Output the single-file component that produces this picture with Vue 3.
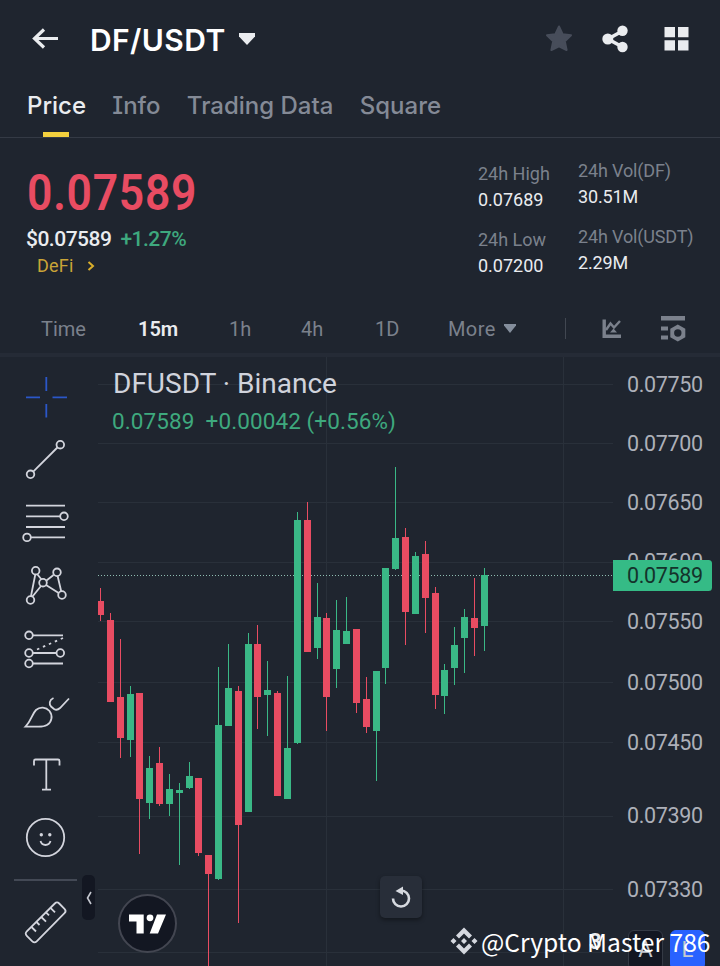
<template>
    <div class="screen">
        <header class="topbar">
            <svg class="back" width="28" height="24" viewBox="0 0 28 24">
                <path d="M27 11.500H3M13 2.500L3.500 11.500L13 20.500" fill="none" stroke="#eaecef" stroke-width="3.2" />
            </svg>
            <h1>DF/USDT</h1>
            <svg class="pair-caret" width="18" height="14" viewBox="0 0 18 14">
                <path d="M1 1H17V4.5L9 13L1 4.5Z" fill="#eaecef" />
            </svg>
            <div class="actions">
                <svg width="30" height="30" viewBox="0 0 30 30">
                    <path d="M15 2.5L18.6 10.2L27 11.3L20.8 17.3L22.6 26L15 22.3L7.4 26L9.2 17.3L3 11.3L11.4 10.2Z" fill="#474d5a" stroke="#474d5a" stroke-width="2" stroke-linejoin="round" />
                </svg>
                <svg class="share" width="30" height="30" viewBox="0 0 30 30">
                    <path d="M22.5 7L8 15L22.5 23" fill="none" stroke="#eaecef" stroke-width="3.6" />
                    <circle cx="22.5" cy="6.7" r="5.2" fill="#eaecef" />
                    <circle cx="7.8" cy="15" r="5.5" fill="#eaecef" />
                    <circle cx="22.5" cy="23" r="5.2" fill="#eaecef" />
                </svg>
                <svg width="30" height="30" viewBox="0 0 30 30">
                    <path d="M2.500 3H13V13.200H2.500ZM16 3H26.500V13.200H16ZM2.500 16.200H13V26.500H2.500ZM16 16.200H26.500V26.500H16Z" fill="#eaecef" />
                </svg>
            </div>
        </header>

        <nav class="tabs">
            <span v-for="tab in tabs" :key="tab" :class="['tab', { active: tab === activeTab }]">{{ tab }}</span>
        </nav>

        <section class="summary">
            <div class="main-price">
                <div class="price">0.07589</div>
                <div class="fiat"><span>$0.07589</span><span class="up">+1.27%</span></div>
                <div class="tag">
                    DeFi
                    <svg width="8" height="12" viewBox="0 0 8 12">
                        <path d="M1.5 2L6 6L1.5 10" fill="none" stroke="#d9ae2b" stroke-width="2" />
                    </svg>
                </div>
            </div>
            <div class="stats">
                <div v-for="s in leftStats" :key="s.label" class="stat">
                    <span class="label">{{ s.label }}</span>
                    <span class="value">{{ s.value }}</span>
                </div>
            </div>
            <div class="stats vol">
                <div v-for="s in rightStats" :key="s.label" class="stat">
                    <span class="label">{{ s.label }}</span>
                    <span class="value">{{ s.value }}</span>
                </div>
            </div>
        </section>

        <div class="intervals">
            <span v-for="i in intervals" :key="i" :class="{ active: i === '15m' }">{{ i }}</span>
            <span class="more">More
                <svg width="12" height="9" viewBox="0 0 12 9"><path d="M0 0H12V1.5L6 9L0 1.5Z" fill="#848e9c" /></svg>
            </span>
            <i class="sep"></i>
            <svg width="22" height="22" viewBox="0 0 22 22" fill="none" stroke="#7b818c">
                <path d="M2.2 1.5V18.3H19" stroke-width="3.4" />
                <path d="M4 12L8.5 5.5L12 9.5L18 3" stroke-width="2.4" />
                <path d="M8 14.5H15L11.5 10.5Z" fill="#7b818c" stroke="none" />
            </svg>
            <svg width="26" height="28" viewBox="0 0 26 28" fill="#7b818c">
                <path d="M0 1H24V5.5H0ZM0 11.5H7V15.5H0ZM0 20.500H7V24.500H0Z" />
                <path fill-rule="evenodd" d="M16.800 9.500L24.300 13.800V22.300L16.800 26.600L9.300 22.300V13.800ZM16.800 14.300A3.700 3.700 0 1 0 16.800 21.700A3.700 3.700 0 1 0 16.800 14.300Z" />
            </svg>
        </div>

        <main class="chart">
            <aside class="toolbar">
                <!-- crosshair -->
                <svg class="tool blue" viewBox="14 366 64 63">
                    <path d="M46.300 377V391M46.300 404V417.500M26 397.300H40M52.500 397.300H67" />
                </svg>
                <!-- trend line -->
                <svg class="tool" viewBox="14 429 64 63">
                    <path d="M33.500 471.400L57.400 447.500" />
                    <circle cx="30.500" cy="474.300" r="3.800" /><circle cx="60.300" cy="444.700" r="3.800" />
                </svg>
                <!-- fib retracement -->
                <svg class="tool" viewBox="14 492 64 63">
                    <path d="M26 505.700H65M26 516.300H60M26 527H65M31 537.400H65" />
                    <circle cx="64" cy="516.300" r="3.800" /><circle cx="27" cy="537.400" r="3.800" />
                </svg>
                <!-- xabcd pattern -->
                <svg class="tool" viewBox="14 555 64 63">
                    <path d="M35.300 574.500L31 596M32.500 596.500L41 586M37.300 574.300L41.300 579.300M46.500 580.500L53.500 575M57.600 576L61.200 591.300M46 585L58.700 593" />
                    <circle v-for="p in patternDots" :key="p[0]" :cx="p[0]" :cy="p[1]" r="3.800" />
                </svg>
                <!-- projection -->
                <svg class="tool" viewBox="14 618 64 63">
                    <path d="M33 635.300H63M33 653H56M33 663.500H63" />
                    <path d="M37 649.500L63 638" stroke-dasharray="2.500 4" />
                    <circle cx="29" cy="635.300" r="3.800" /><circle cx="29" cy="653" r="3.800" />
                    <circle cx="60.300" cy="653" r="3.800" /><circle cx="29" cy="663.500" r="3.800" />
                </svg>
                <!-- brush -->
                <svg class="tool" viewBox="14 681 64 63">
                    <path d="M25.500 726.700C31 721 32 714 36 710C40 706.500 46 707 49.500 711C53 715.500 52 722 47 725C44 726.800 41 726.700 38 726.700Z" />
                    <path d="M53.500 698C49 700 49 704 51 706.500L54 709C56 710.300 58.500 709.500 60 708L69 698.500" />
                </svg>
                <!-- text -->
                <svg class="tool" viewBox="14 744 64 63">
                    <path d="M34 765.500V761Q34 759.500 35.500 759.500H58Q59.500 759.500 59.500 761V765.500M46.300 759.500V789.500M42 789.700H51" />
                </svg>
                <!-- emoji -->
                <svg class="tool" viewBox="14 807 64 63">
                    <circle cx="45.500" cy="837.500" r="18.700" />
                    <path d="M40.500 841C42 846.300 49 846.300 50.500 841" />
                    <circle class="dot" cx="41.300" cy="834.700" r="1.700" /><circle class="dot" cx="49.800" cy="834.700" r="1.700" />
                </svg>
                <hr />
                <!-- ruler -->
                <svg class="tool" viewBox="14 891 64 63">
                    <path d="M54.800 903.500Q57 901.300 59.200 903.500L64.500 908.800Q66.700 911 64.500 913.200L36.700 941.300Q34.500 943.500 32.300 941.300L26.800 935.800Q24.600 933.600 26.800 931.400Z" />
                    <path d="M31.500 927L36 931.500M36.500 922L39.500 925M41.300 917L46 921.700M46 912.300L49 915.300M50.500 907.800L55 912.300" />
                </svg>
            </aside>

            <svg class="plot" width="622" height="609" viewBox="98 357 622 609">
                <g stroke="#29303a">
                    <line v-for="y in gridRows" :key="y" x1="98" x2="613" :y1="y" :y2="y" />
                    <line v-for="x in gridCols" :key="x" :x1="x" :x2="x" y1="357" y2="966" />
                </g>
                <line x1="98" x2="613" y1="575.500" y2="575.500" stroke="#8fbdb2" stroke-dasharray="1 2" />
                <g v-for="c in candles" :key="c[0]" :fill="c[5] ? '#3ab886' : '#e84c62'">
                    <rect :x="c[0] + 3" :y="c[1]" width="1" :height="c[4] - c[1]" />
                    <rect :x="c[0]" :y="c[2]" width="7" :height="c[3] - c[2]" />
                </g>
                <g class="axis">
                    <text v-for="p in prices" :key="p[0]" x="627" :y="p[1]" textLength="76">{{ p[0] }}</text>
                </g>
                <path d="M613 560H708.500Q712 560 712 563.500V587.500Q712 591 708.500 591H613Z" fill="#35bb86" />
                <text class="last" x="627" y="583" textLength="76">0.07589</text>
            </svg>

            <div class="legend">
                <div class="symbol">DFUSDT · Binance</div>
                <div class="change"><span>0.07589</span><span>+0.00042 (+0.56%)</span></div>
            </div>

            <div class="collapse">
                <svg width="6" height="14" viewBox="0 0 6 14"><path d="M5 1L1.500 7L5 13" fill="none" stroke="#c5c8d0" stroke-width="1.600" /></svg>
            </div>

            <div class="tv-logo">
                <svg width="38" height="20" viewBox="130 914.500 38 20" fill="#fff">
                    <path d="M130 915H144.700V934H137.500V922H130ZM158 915H167L159 934H150.700Z" />
                    <circle cx="151" cy="918.300" r="3.400" />
                </svg>
            </div>

            <div class="reset">
                <svg width="24" height="26" viewBox="389 884 24 26">
                    <path d="M393 898.500A8 8 0 1 0 401 890.500H400" fill="none" stroke="#d6d9df" stroke-width="2.600" />
                    <path d="M395.500 891L403 886.500V895Z" fill="#d6d9df" />
                </svg>
            </div>

            <span class="time-label">3</span>
            <div class="scale-modes">
                <span>A</span>
                <span class="on">L</span>
            </div>

            <div class="author">
                <svg width="28" height="28" viewBox="0 0 28 28" fill="#d5d8df">
                    <path d="M14 0.500L22 8.500L19 11.500L14 6.500L9 11.500L6 8.500ZM14 27.500L22 19.500L19 16.500L14 21.500L9 16.500L6 19.500ZM14 11L17 14L14 17L11 14ZM3.500 11L6.500 14L3.500 17L0.500 14ZM24.500 11L27.500 14L24.500 17L21.500 14Z" />
                </svg>
                <span>@Crypto Master 786</span>
            </div>
        </main>
    </div>
</template>

<script setup>
import { ref } from 'vue'

const tabs = ['Price', 'Info', 'Trading Data', 'Square']
const activeTab = ref('Price')
const intervals = ['Time', '15m', '1h', '4h', '1D']

const leftStats = [
    { label: '24h High', value: '0.07689' },
    { label: '24h Low', value: '0.07200' },
]
const rightStats = [
    { label: '24h Vol(DF)', value: '30.51M' },
    { label: '24h Vol(USDT)', value: '2.29M' },
]

const patternDots = [[35.7, 570.7], [57, 572.3], [43, 582.7], [62, 595], [30.5, 600]]

const gridRows = [384.5, 443.5, 502.5, 562.5, 621.5, 682.5, 742.5, 816.5, 889.5, 952.5]
const gridCols = [326.5, 563.5]
const prices = [
    ['0.07750', 392], ['0.07700', 451], ['0.07650', 510], ['0.07600', 569], ['0.07550', 629],
    ['0.07500', 690], ['0.07450', 750], ['0.07390', 823], ['0.07330', 897],
]

// x, wick top, body top, body bottom, wick bottom, rising
const candles = [
    [97, 588, 601, 615, 621, 0],
    [107, 613, 620, 702, 702, 0],
    [117, 639, 697, 738, 758, 0],
    [127, 686, 694, 740, 757, 1],
    [136, 693, 693, 799, 854, 0],
    [146, 756, 768, 803, 819, 1],
    [156, 747, 763, 804, 806, 0],
    [166, 774, 789, 804, 816, 1],
    [176, 783, 790, 793, 865, 1],
    [186, 762, 776, 788, 789, 1],
    [195, 778, 778, 853, 856, 0],
    [205, 855, 855, 874, 966, 0],
    [215, 667, 725, 879, 880, 1],
    [225, 644, 688, 726, 726, 1],
    [235, 686, 691, 825, 923, 0],
    [245, 633, 644, 812, 812, 1],
    [254, 625, 644, 697, 729, 0],
    [264, 661, 690, 695, 736, 1],
    [274, 691, 693, 796, 796, 0],
    [284, 676, 748, 799, 799, 1],
    [294, 512, 520, 743, 744, 1],
    [304, 502, 520, 652, 652, 0],
    [314, 583, 617, 648, 659, 1],
    [323, 613, 618, 697, 731, 0],
    [333, 600, 630, 669, 688, 1],
    [343, 597, 631, 644, 644, 1],
    [353, 629, 629, 703, 713, 0],
    [363, 677, 699, 727, 733, 0],
    [373, 671, 671, 731, 781, 1],
    [382, 568, 568, 668, 684, 1],
    [392, 467, 538, 569, 570, 1],
    [402, 528, 537, 612, 645, 0],
    [412, 552, 556, 614, 614, 1],
    [422, 541, 554, 598, 633, 0],
    [432, 587, 593, 695, 709, 0],
    [441, 664, 670, 696, 714, 1],
    [451, 627, 645, 668, 685, 1],
    [461, 609, 617, 638, 673, 1],
    [471, 578, 618, 628, 656, 0],
    [481, 568, 575, 626, 651, 1],
]
</script>

<style>
body {
    margin: 0;
    background: #1f252f;
}
</style>

<style scoped>
.screen {
    width: 720px;
    height: 966px;
    overflow: hidden;
    background: #1f252f;
    font-family: Roboto, sans-serif;
    color: #eaecef;
}
svg {
    display: block;
    flex: none;
}

.topbar {
    display: flex;
    align-items: center;
    height: 78px;
    padding: 0 28px 0 31px;
    box-sizing: border-box;
}
h1 {
    margin: 1px 0 0 31px;
    font: 600 30px/40px Inter, sans-serif;
    letter-spacing: 0.4px;
    width: 148px;
    color: #fff;
}
.actions {
    display: flex;
    margin-left: auto;
    width: 148px;
    justify-content: space-between;
}
.share {
    margin-right: 6px;
}

.tabs {
    display: flex;
    gap: 26.3px;
    height: 59px;
    padding-left: 27px;
    border-bottom: 1px solid #343a45;
    font: 500 24px/55px Inter, sans-serif;
    font-feature-settings: "cv08";
    color: #848a96;
}
.tab.active {
    display: flex;
    flex-direction: column;
    align-items: center;
    color: #eaecef;
}
.tab.active::after {
    content: "";
    width: 26px;
    height: 5px;
    margin-top: -1px;
    background: #f3d03e;
}

.summary {
    display: flex;
    height: 162px;
}
.main-price {
    width: 451px;
    padding-left: 27px;
    box-sizing: content-box;
}
.price {
    margin-top: 28px;
    font-size: 50px;
    font-weight: 600;
    line-height: 54px;
    letter-spacing: 0.8px;
    color: #e84c62;
    transform: scaleX(0.89);
    transform-origin: left;
}
.fiat {
    display: flex;
    gap: 9px;
    margin: 5px 0 0 -1px;
    font-size: 21px;
    font-weight: 500;
    line-height: 28px;
    letter-spacing: -0.5px;
}
.up {
    color: #3ea97e;
}
.tag {
    display: flex;
    align-items: center;
    gap: 14px;
    padding-left: 10px;
    font-size: 18px;
    line-height: 26px;
    letter-spacing: 0.2px;
    color: #c9a437;
}
.stats {
    width: 100px;
    padding-top: 23px;
}
.vol {
    width: 130px;
    padding-top: 20px;
}
.vol .stat {
    letter-spacing: -0.15px;
}
.stat {
    display: flex;
    flex-direction: column;
    height: 66px;
    font-size: 18px;
    line-height: 26px;
    white-space: nowrap;
}
.label {
    color: #7b818c;
}

.intervals {
    display: grid;
    grid-template-columns: 97px 91px 72px 74px 73px 117px 37px 59px 30px;
    align-items: center;
    height: 54px;
    padding: 3px 0 0 41px;
    box-sizing: border-box;
    font-size: 20px;
    color: #7b818c;
}
.intervals .active {
    color: #eaecef;
    font-weight: 600;
}
.more {
    display: flex;
    align-items: center;
    gap: 8px;
    letter-spacing: 0.4px;
}
.sep {
    width: 1px;
    height: 21px;
    background: #414751;
}

.chart {
    position: relative;
    display: flex;
    height: 609px;
    border-top: 4px solid #252b36;
    margin-top: -1px;
}
.toolbar {
    width: 84px;
    padding: 9px 0 0 14px;
    flex: none;
}
.tool {
    width: 64px;
    height: 63px;
    fill: none;
    stroke: #d3d5dd;
    stroke-width: 1.8;
}
.blue {
    stroke: #2b57c8;
}
.dot {
    fill: #d3d5dd;
    stroke: none;
}
hr {
    width: 63px;
    height: 2px;
    margin: 9px 0 10px;
    border: 0;
    background: #434955;
}
.axis text,
.last {
    font-size: 21.5px;
    fill: #adb0b9;
}
.last {
    fill: #14332b;
}

.legend {
    position: absolute;
    left: 112px;
    top: 8px;
}
.symbol {
    padding-left: 1px;
    font-size: 28px;
    line-height: 37px;
    color: #d0d3dc;
}
.change {
    display: flex;
    gap: 11px;
    font-size: 22.5px;
    line-height: 38px;
    letter-spacing: 0.1px;
    color: #3ea97e;
}
.collapse,
.tv-logo,
.reset {
    position: absolute;
    display: flex;
    align-items: center;
    justify-content: center;
    box-sizing: border-box;
}
.collapse {
    left: 82px;
    top: 518px;
    width: 13px;
    height: 45px;
    border-radius: 5px;
    background: #131722;
}
.tv-logo {
    left: 118px;
    top: 537px;
    width: 59px;
    height: 59px;
    border: 2px solid #434651;
    border-radius: 50%;
    background: #131722;
}
.reset {
    left: 380px;
    top: 519px;
    width: 42px;
    height: 42px;
    border-radius: 5px;
    background: #282e39;
    box-shadow: 0 2px 4px rgba(0, 0, 0, 0.4);
}
.time-label {
    position: absolute;
    left: 589px;
    top: 572px;
    font-size: 22px;
    font-weight: 700;
    line-height: 26px;
}
.scale-modes {
    position: absolute;
    left: 628px;
    top: 573px;
    display: flex;
    gap: 7px;
}
.scale-modes span {
    width: 35px;
    height: 40px;
    box-sizing: border-box;
    border: 1px solid #343a45;
    border-radius: 6px;
    background: #131722;
    font-size: 22px;
    line-height: 38px;
    text-align: center;
    color: #c5c8d0;
}
.scale-modes .on {
    border-color: #2962ff;
    background: #2962ff;
}
.author {
    position: absolute;
    left: 450px;
    top: 566px;
    display: flex;
    align-items: center;
    gap: 3px;
    font: 400 24.6px/36px "Noto Sans CJK SC", sans-serif;
    color: #fff;
    white-space: nowrap;
}
</style>
